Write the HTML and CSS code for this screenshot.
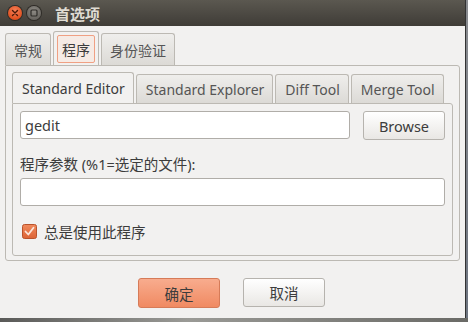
FILE: index.html
```html
<!DOCTYPE html>
<html lang="zh-CN">
<head>
  <meta charset="UTF-8" />
  <title>首选项</title>
  <link rel="stylesheet" href="styles.css">
</head>
<body>
  <div class="desk">
    <div class="window">
      <div class="titlebar">
        <span class="wbtn close">
          <svg width="14" height="14" viewBox="0 0 14 14"><path d="M4.5 4.5 L9.5 9.5 M9.5 4.5 L4.5 9.5" stroke="#4a1a08" stroke-width="1.4" stroke-linecap="round"/></svg>
        </span>
        <span class="wbtn maxi">
          <svg width="14" height="14" viewBox="0 0 14 14"><rect x="4" y="4" width="6" height="6" rx="1" fill="none" stroke="#2e2c29" stroke-width="1.2"/></svg>
        </span>
        <span class="title">首选项</span>
      </div>

      <div class="body">
        <div class="tabs outer-tabs">
          <div class="tab">常规</div>
          <div class="tab active"><span class="focus">程序</span></div>
          <div class="tab">身份验证</div>
        </div>

        <div class="panel outer-panel">
          <div class="tabs inner-tabs">
            <div class="tab active">Standard Editor</div>
            <div class="tab">Standard Explorer</div>
            <div class="tab">Diff Tool</div>
            <div class="tab">Merge Tool</div>
          </div>

          <div class="panel inner-panel">
            <div class="row">
              <div class="entry grow">gedit</div>
              <button class="btn browse">Browse</button>
            </div>
            <div class="label">程序参数 (%1=选定的文件):</div>
            <div class="entry"></div>
            <label class="check">
              <svg width="15" height="15" viewBox="0 0 15 15">
                <defs>
                  <linearGradient id="cb" x1="0" y1="0" x2="0" y2="1">
                    <stop offset="0" stop-color="#f08a5d"/>
                    <stop offset="1" stop-color="#dd6436"/>
                  </linearGradient>
                </defs>
                <rect x="0.5" y="0.5" width="14" height="14" rx="2" fill="url(#cb)" stroke="#b9532c"/>
                <path d="M3.5 7.5 L6.3 10.5 L11.5 3.8" fill="none" stroke="#fbe6dc" stroke-width="1.8" stroke-linecap="round" stroke-linejoin="round"/>
              </svg>
              <span>总是使用此程序</span>
            </label>
          </div>
        </div>

        <div class="actions">
          <button class="btn ok">确定</button>
          <button class="btn">取消</button>
        </div>
      </div>
    </div>
    <div class="right-strip"></div>
  </div>
  <div class="bottom-strip"></div>
</body>
</html>
```

FILE: styles.css
```css
body { margin: 0; background: #3a3935; font-family: "Noto Sans", "Noto Sans CJK SC", sans-serif; font-size: 14.5px; color: #3c3c3c; }
.desk { display: flex; height: 318px; }
.window { width: 465px; height: 318px; background: #f2f1f0; display: flex; flex-direction: column; }
.right-strip { flex: 1; background: linear-gradient(#8a8c90, #6d7480); border-left: 1px solid #333; }
.bottom-strip { height: 4px; background: linear-gradient(90deg, #5a5a58, #9a9a96 40%, #6a6a66); }

.titlebar {
  height: 26px; display: flex; align-items: center; padding-left: 8px;
  background: linear-gradient(#5b5850, #3f3c37);
}
.wbtn { width: 14px; height: 14px; border-radius: 50%; display: flex; margin-right: 5px; }
.wbtn.close { background: radial-gradient(circle at 50% 35%, #f7815a, #e0501f 70%, #b83a12); box-shadow: 0 0 0 1px #2e2b27; }
.wbtn.maxi { background: radial-gradient(circle at 50% 35%, #8d8a84, #66635e 75%); box-shadow: 0 0 0 1px #2e2b27; }
.title { margin-left: 9px; color: #dfdbd2; font-weight: bold; font-size: 15px; }

.body { padding: 5px 5px 0; flex: 1; display: flex; flex-direction: column; }

.tabs { display: flex; align-items: flex-end; gap: 2px; }
.tab {
  border: 1px solid #bcb9b3; border-bottom: none; border-radius: 3px 3px 0 0;
  background: linear-gradient(#efeeec, #dcdad6); color: #555;
  display: flex; align-items: center;
}
.tab.active { background: #f2f1f0; color: #3c3c3c; }

.outer-tabs .tab { height: 31px; padding: 0 8px; font-size: 14px; }
.outer-tabs .tab.active { height: 33px; padding: 0 3px; }
.focus {
  height: 26px; padding: 0 4px; display: flex; align-items: center;
  border: 1px solid #f0a083; border-radius: 2px; background: #f6ebe5;
}

.panel { border: 1px solid #bcb9b3; border-radius: 0 3px 3px 3px; }
.outer-panel { padding: 6px 6px 5px; height: 183px; }
.inner-tabs .tab { height: 28px; padding: 0 8px 0 9px; font-size: 14px; }
.inner-tabs .tab.active { height: 30px; }
.inner-panel { padding: 7px 7px 0; height: 144px; }

.row { display: flex; gap: 13px; }
.grow { flex: 1; }
.entry {
  height: 26px; border: 1px solid #b0ada8; border-radius: 3px; background: #fff;
  display: flex; align-items: center; padding-left: 4px; color: #3c3c3c;
}
.btn {
  font: inherit; color: #3c3c3c; width: 82px; height: 29px;
  border: 1px solid #b6b3ae; border-radius: 3px;
  background: linear-gradient(#ffffff, #e9e7e4);
}
.label { margin: 14px 0 4px; height: 20px; line-height: 20px; }
.check { display: flex; align-items: center; gap: 7px; margin: 17px 0 0 2px; height: 16px; }

.actions { display: flex; justify-content: center; gap: 23px; margin-top: 17px; padding-right: 2px; }
.btn.ok { background: linear-gradient(#f8ac8e, #f08a62); border-color: #d67b58; height: 30px; }
```
